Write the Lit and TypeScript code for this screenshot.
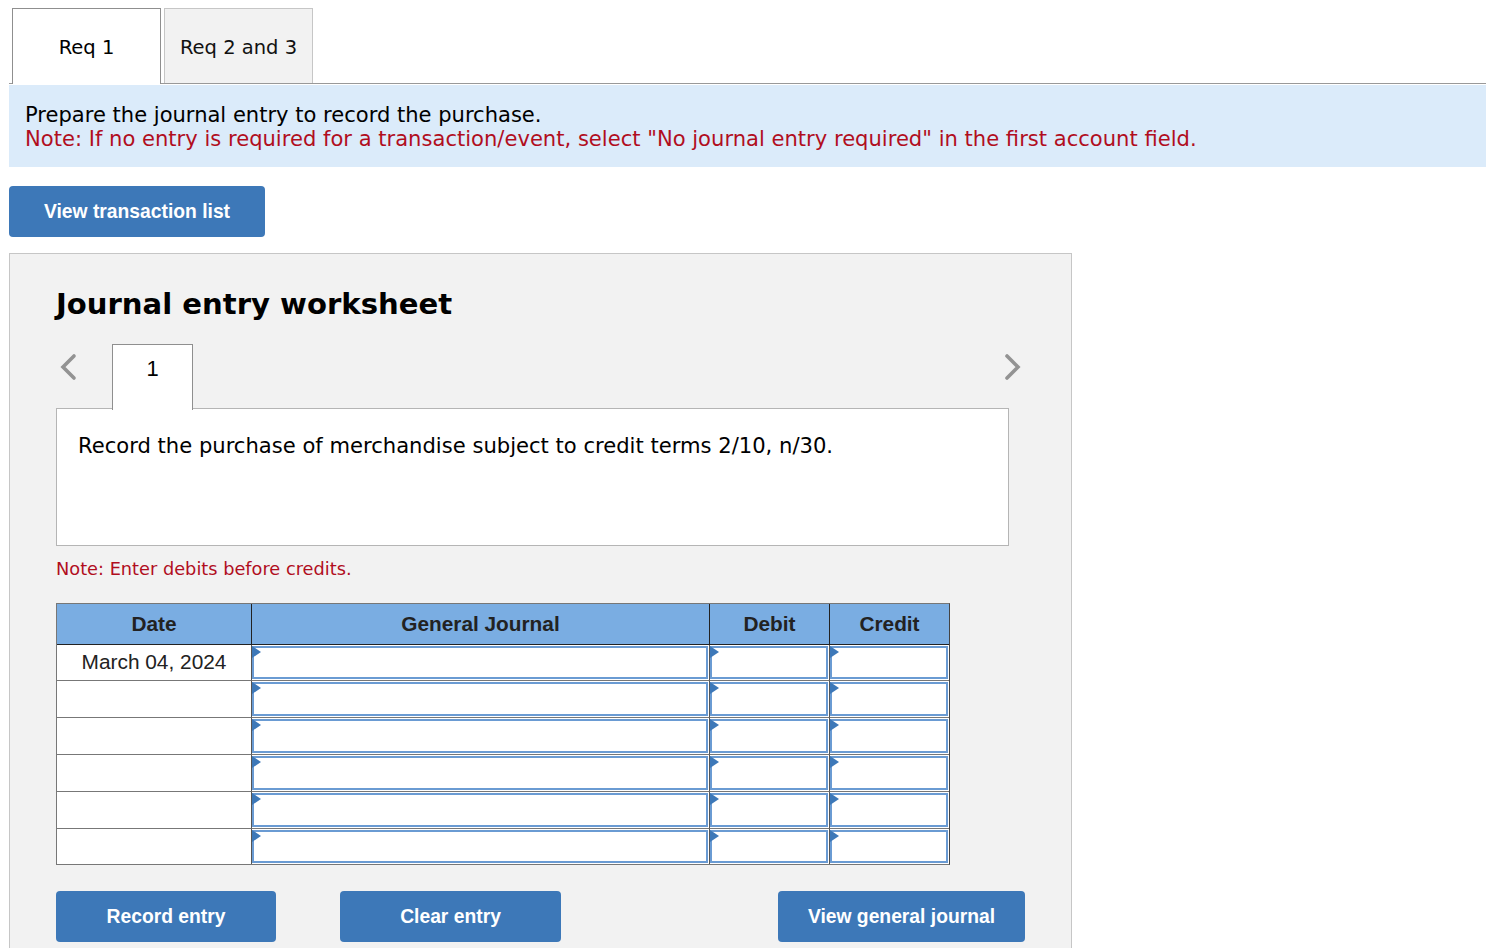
import { LitElement, html, css } from "lit";
import { customElement } from "lit/decorators.js";

const ROWS = ["March 04, 2024", "", "", "", "", ""];

@customElement("app-root")
export class AppRoot extends LitElement {
  static styles = css`
    :host {
      display: block;
      height: 948px;
      overflow: hidden;
      background: #fff;
      font-family: "DejaVu Sans", Verdana, sans-serif;
      color: #000;
      box-sizing: border-box;
      padding: 8px 16px 0 9px;
    }
    .tabs {
      display: flex;
      gap: 3px;
      padding-left: 3px;
      height: 76px;
      border-bottom: 1px solid #999;
      box-sizing: border-box;
    }
    .tab {
      width: 149px;
      height: 75px;
      box-sizing: border-box;
      border: 1px solid #c6c6c6;
      border-bottom: none;
      background: #f2f2f2;
      display: flex;
      align-items: center;
      justify-content: center;
      font-size: 19.5px;
      color: #111;
      padding-top: 3px;
    }
    .tab.active {
      height: 76px;
      background: #fff;
      border-color: #8f8f8f;
      color: #000;
      padding-top: 1px;
    }
    .band {
      margin-top: 1px;
      height: 82px;
      background: #dbebfa;
      box-sizing: border-box;
      padding: 18px 16px 0;
      font-size: 21.05px;
      line-height: 24px;
    }
    .band .red {
      font-size: 21.09px;
    }
    .red {
      color: #b10e1e;
    }
    .btn {
      display: flex;
      align-items: center;
      justify-content: center;
      box-sizing: border-box;
      height: 51px;
      background: #3d78b8;
      color: #fff;
      border-radius: 4px;
      font-family: "Liberation Sans", Arial, sans-serif;
      font-weight: 700;
      font-size: 19.3px;
    }
    .view-list {
      margin-top: 19px;
      width: 256px;
    }
    .panel {
      margin-top: 16px;
      width: 1063px;
      height: 720px;
      box-sizing: border-box;
      background: #f2f2f2;
      border: 1px solid #c6c6c6;
      padding: 0 46px;
    }
    h2 {
      margin: 31px 0 0;
      font-size: 29.1px;
      line-height: 38px;
      font-weight: 700;
    }
    .strip {
      margin-top: 21px;
      width: 966px;
      height: 66px;
      display: flex;
      position: relative;
      z-index: 1;
    }
    .arrow {
      width: 56px;
      height: 46px;
      display: flex;
      align-items: center;
      padding-left: 3px;
      box-sizing: border-box;
    }
    .arrow svg {
      width: 18px;
      height: 28px;
      display: block;
    }
    .arrow.next {
      width: auto;
      margin-left: auto;
      padding: 0;
    }
    .num {
      width: 81px;
      height: 66px;
      box-sizing: border-box;
      background: #fff;
      border: 1px solid #8f8f8f;
      border-bottom: none;
      text-align: center;
      padding-top: 11px;
      font-family: "Liberation Sans", Arial, sans-serif;
      font-size: 22px;
      line-height: 26px;
    }
    .box {
      margin-top: -2px;
      width: 953px;
      height: 138px;
      box-sizing: border-box;
      background: #fff;
      border: 1px solid #b5b5b5;
      padding: 24px 21px 0;
      font-size: 21.1px;
      line-height: 26px;
    }
    .note {
      margin-top: 12px;
      font-size: 17.75px;
      line-height: 22px;
    }
    .grid {
      margin-top: 23px;
      width: 894px;
      display: grid;
      grid-template-columns: 194px 458px 120px 120px;
      border-top: 1px solid #777;
      border-left: 1px solid #777;
      border-right: 1px solid #444;
      border-bottom: 1px solid #777;
      box-sizing: border-box;
      font-family: "Liberation Sans", Arial, sans-serif;
      color: #222;
    }
    .head {
      height: 41px;
      background: #7aade2;
      border-bottom: 1px solid #222;
      border-left: 1px solid #222;
      box-sizing: border-box;
      display: flex;
      align-items: center;
      justify-content: center;
      font-weight: 700;
      font-size: 20.8px;
    }
    .head:first-child {
      border-left: none;
    }
    .date,
    .cell {
      height: 37px;
      background: #fff;
      box-sizing: border-box;
      border-bottom: 1px solid #777;
    }
    .date.first,
    .cell.first {
      height: 36px;
    }
    .date.last,
    .cell.last {
      height: 35px;
      border-bottom: none;
    }
    .date {
      display: flex;
      align-items: center;
      justify-content: center;
      font-size: 20.85px;
      padding-bottom: 2px;
    }
    .cell {
      border-left: 1px solid #555;
      padding: 1px 1px 1px 0;
      position: relative;
    }
    .field {
      height: 100%;
      box-sizing: border-box;
      border: 2px solid #6a9bd3;
      background: #fff;
    }
    .flag {
      position: absolute;
      left: 0;
      top: 1px;
      width: 0;
      height: 0;
      border-left: 9px solid #3d78b8;
      border-top: 6px solid transparent;
      border-bottom: 6px solid transparent;
    }
    .actions {
      margin-top: 26px;
      display: grid;
      grid-template-columns: 220px 221px 400px;
      column-gap: 64px;
      justify-content: start;
    }
    .actions .btn {
      padding-top: 1px;
    }
    .actions .btn:last-child {
      margin-left: 153px;
      width: 247px;
    }
  `;

  private chevron(next: boolean) {
    return html`<svg viewBox="0 0 18 28" aria-hidden="true">
      <path
        d=${next ? "M3 3 L14 14 L3 25" : "M15 3 L4 14 L15 25"}
        fill="none"
        stroke="#939393"
        stroke-width="3.6"
        stroke-linecap="round"
        stroke-linejoin="miter"
      />
    </svg>`;
  }

  render() {
    return html`
      <div class="tabs">
        <div class="tab active">Req 1</div>
        <div class="tab">Req 2 and 3</div>
      </div>
      <div class="band">
        <div>Prepare the journal entry to record the purchase.</div>
        <div class="red">Note: If no entry is required for a transaction/event, select "No journal entry required" in the first account field.</div>
      </div>
      <div class="btn view-list">View transaction list</div>
      <div class="panel">
        <h2>Journal entry worksheet</h2>
        <div class="strip">
          <div class="arrow">${this.chevron(false)}</div>
          <div class="num">1</div>
          <div class="arrow next">${this.chevron(true)}</div>
        </div>
        <div class="box">Record the purchase of merchandise subject to credit terms 2/10, n/30.</div>
        <div class="note red">Note: Enter debits before credits.</div>
        <div class="grid">
          <div class="head">Date</div>
          <div class="head">General Journal</div>
          <div class="head">Debit</div>
          <div class="head">Credit</div>
          ${ROWS.map((d, i) => {
            const pos = i === 0 ? "first" : i === ROWS.length - 1 ? "last" : "";
            return html`
              <div class="date ${pos}">${d}</div>
              ${[0, 1, 2].map(
                () => html`<div class="cell ${pos}"><div class="field"></div><span class="flag"></span></div>`
              )}
            `;
          })}
        </div>
        <div class="actions">
          <div class="btn">Record entry</div>
          <div class="btn">Clear entry</div>
          <div class="btn">View general journal</div>
        </div>
      </div>
    `;
  }
}
